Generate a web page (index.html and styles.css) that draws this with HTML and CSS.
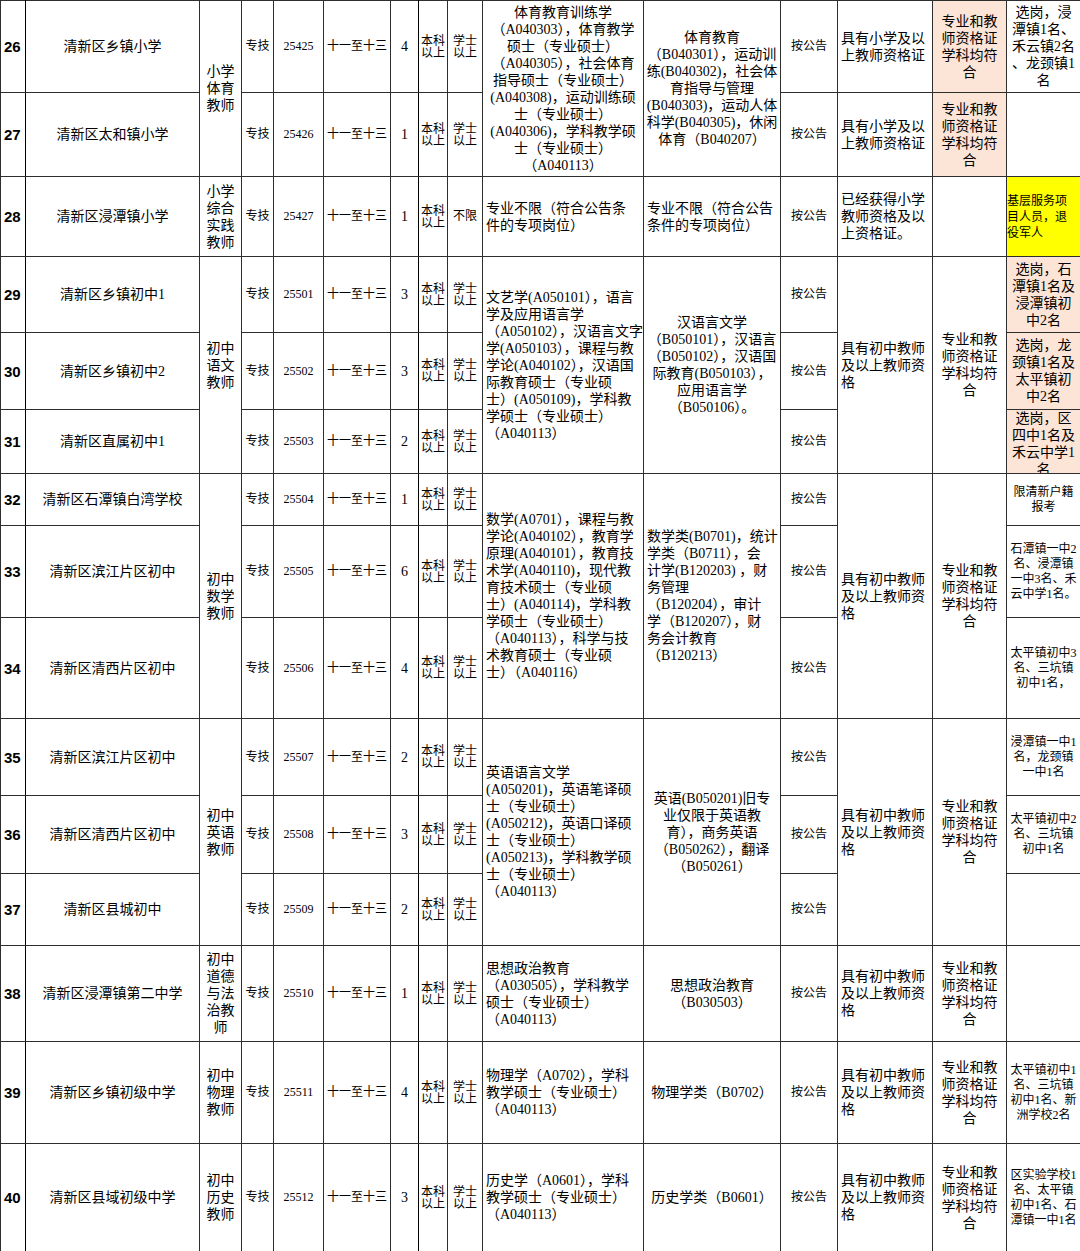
FILE: index.html
```html
<!DOCTYPE html>
<html lang="zh-CN">
<head>
<meta charset="utf-8">
<title>清新区教师招聘岗位表</title>
<link rel="stylesheet" href="styles.css">
</head>
<body>
<table class="t">
<colgroup>
<col class="w1"><col class="w2"><col class="w3"><col class="w4"><col class="w5"><col class="w6"><col class="w7"><col class="w8"><col class="w9"><col class="w10"><col class="w11"><col class="w12"><col class="w13"><col class="w14"><col class="w15">
</colgroup>
<tbody>
<tr class="r26">
<td class="n">26</td><td class="s">清新区乡镇小学</td>
<td class="p" rowspan="2">小学<br>体育<br>教师</td>
<td class="sm">专技</td><td class="sm">25425</td><td class="sm">十一至十三</td><td class="cnt">4</td>
<td class="edu">本科<br>以上</td><td class="edu">学士<br>以上</td>
<td rowspan="2">体育教育训练学<br>（A040303），体育教学<br>硕士（专业硕士）<br>（A040305），社会体育<br>指导硕士（专业硕士）<br>(A040308)，运动训练硕<br>士（专业硕士）<br>(A040306)，学科教学硕<br>士（专业硕士）<br>（A040113）</td>
<td rowspan="2">体育教育<br>（B040301），运动训<br>练(B040302)，社会体<br>育指导与管理<br>(B040303)，运动人体<br>科学(B040305)，休闲<br>体育（B040207）</td>
<td class="sm">按公告</td>
<td class="l">具有小学及以<br>上教师资格证</td>
<td class="peach">专业和教<br>师资格证<br>学科均符<br>合</td>
<td>选岗，浸<br>潭镇1名、<br>禾云镇2名<br>、龙颈镇1<br>名</td>
</tr>
<tr class="r27">
<td class="n">27</td><td class="s">清新区太和镇小学</td>
<td class="sm">专技</td><td class="sm">25426</td><td class="sm">十一至十三</td><td class="cnt">1</td>
<td class="edu">本科<br>以上</td><td class="edu">学士<br>以上</td>
<td class="sm">按公告</td>
<td class="l">具有小学及以<br>上教师资格证</td>
<td class="peach">专业和教<br>师资格证<br>学科均符<br>合</td>
<td></td>
</tr>
<tr class="r28">
<td class="n">28</td><td class="s">清新区浸潭镇小学</td>
<td class="p">小学<br>综合<br>实践<br>教师</td>
<td class="sm">专技</td><td class="sm">25427</td><td class="sm">十一至十三</td><td class="cnt">1</td>
<td class="edu">本科<br>以上</td><td class="sm">不限</td>
<td class="l">专业不限（符合公告条<br>件的专项岗位）</td>
<td class="l">专业不限（符合公告<br>条件的专项岗位）</td>
<td class="sm">按公告</td>
<td class="l">已经获得小学<br>教师资格及以<br>上资格证。</td>
<td></td>
<td class="yellow rm l">基层服务项<br>目人员，退<br>役军人</td>
</tr>
<tr class="r29">
<td class="n">29</td><td class="s">清新区乡镇初中1</td>
<td class="p" rowspan="3">初中<br>语文<br>教师</td>
<td class="sm">专技</td><td class="sm">25501</td><td class="sm">十一至十三</td><td class="cnt">3</td>
<td class="edu">本科<br>以上</td><td class="edu">学士<br>以上</td>
<td class="l" rowspan="3">文艺学(A050101），语言<br>学及应用语言学<br>（A050102），汉语言文字<br>学(A050103），课程与教<br>学论(A040102），汉语国<br>际教育硕士（专业硕<br>士）(A050109)，学科教<br>学硕士（专业硕士）<br>（A040113）</td>
<td rowspan="3">汉语言文学<br>（B050101），汉语言<br>（B050102），汉语国<br>际教育(B050103），<br>应用语言学<br>（B050106）。</td>
<td class="sm">按公告</td>
<td class="l" rowspan="3">具有初中教师<br>及以上教师资<br>格</td>
<td rowspan="3">专业和教<br>师资格证<br>学科均符<br>合</td>
<td class="peach">选岗，石<br>潭镇1名及<br>浸潭镇初<br>中2名</td>
</tr>
<tr class="r30">
<td class="n">30</td><td class="s">清新区乡镇初中2</td>
<td class="sm">专技</td><td class="sm">25502</td><td class="sm">十一至十三</td><td class="cnt">3</td>
<td class="edu">本科<br>以上</td><td class="edu">学士<br>以上</td>
<td class="sm">按公告</td>
<td class="peach">选岗，龙<br>颈镇1名及<br>太平镇初<br>中2名</td>
</tr>
<tr class="r31">
<td class="n">31</td><td class="s">清新区直属初中1</td>
<td class="sm">专技</td><td class="sm">25503</td><td class="sm">十一至十三</td><td class="cnt">2</td>
<td class="edu">本科<br>以上</td><td class="edu">学士<br>以上</td>
<td class="sm">按公告</td>
<td class="peach"><div class="clip">选岗，区<br>四中1名及<br>禾云中学1<br>名</div></td>
</tr>
<tr class="r32">
<td class="n">32</td><td class="s">清新区石潭镇白湾学校</td>
<td class="p" rowspan="3">初中<br>数学<br>教师</td>
<td class="sm">专技</td><td class="sm">25504</td><td class="sm">十一至十三</td><td class="cnt">1</td>
<td class="edu">本科<br>以上</td><td class="edu">学士<br>以上</td>
<td class="l" rowspan="3">数学(A0701），课程与教<br>学论(A040102），教育学<br>原理(A040101），教育技<br>术学(A040110)，现代教<br>育技术硕士（专业硕<br>士）(A040114)，学科教<br>学硕士（专业硕士）<br>（A040113），科学与技<br>术教育硕士（专业硕<br>士）（A040116）</td>
<td class="l" rowspan="3">数学类(B0701)，统计<br>学类（B0711），会<br>计学(B120203)&nbsp;，财<br>务管理<br>（B120204），审计<br>学（B120207），财<br>务会计教育<br>（B120213）</td>
<td class="sm">按公告</td>
<td class="l" rowspan="3">具有初中教师<br>及以上教师资<br>格</td>
<td rowspan="3">专业和教<br>师资格证<br>学科均符<br>合</td>
<td class="rm">限清新户籍<br>报考</td>
</tr>
<tr class="r33">
<td class="n">33</td><td class="s">清新区滨江片区初中</td>
<td class="sm">专技</td><td class="sm">25505</td><td class="sm">十一至十三</td><td class="cnt">6</td>
<td class="edu">本科<br>以上</td><td class="edu">学士<br>以上</td>
<td class="sm">按公告</td>
<td class="rm">石潭镇一中2<br>名、浸潭镇<br>一中3名、禾<br>云中学1名。</td>
</tr>
<tr class="r34">
<td class="n">34</td><td class="s">清新区清西片区初中</td>
<td class="sm">专技</td><td class="sm">25506</td><td class="sm">十一至十三</td><td class="cnt">4</td>
<td class="edu">本科<br>以上</td><td class="edu">学士<br>以上</td>
<td class="sm">按公告</td>
<td class="rm">太平镇初中3<br>名、三坑镇<br>初中1名，</td>
</tr>
<tr class="r35">
<td class="n">35</td><td class="s">清新区滨江片区初中</td>
<td class="p" rowspan="3">初中<br>英语<br>教师</td>
<td class="sm">专技</td><td class="sm">25507</td><td class="sm">十一至十三</td><td class="cnt">2</td>
<td class="edu">本科<br>以上</td><td class="edu">学士<br>以上</td>
<td class="l" rowspan="3">英语语言文学<br>(A050201)，英语笔译硕<br>士（专业硕士）<br>(A050212)，英语口译硕<br>士（专业硕士）<br>(A050213)，学科教学硕<br>士（专业硕士）<br>（A040113）</td>
<td rowspan="3">英语(B050201)旧专<br>业仅限于英语教<br>育），商务英语<br>（B050262），翻译<br>（B050261）</td>
<td class="sm">按公告</td>
<td class="l" rowspan="3">具有初中教师<br>及以上教师资<br>格</td>
<td rowspan="3">专业和教<br>师资格证<br>学科均符<br>合</td>
<td class="rm">浸潭镇一中1<br>名，龙颈镇<br>一中1名</td>
</tr>
<tr class="r36">
<td class="n">36</td><td class="s">清新区清西片区初中</td>
<td class="sm">专技</td><td class="sm">25508</td><td class="sm">十一至十三</td><td class="cnt">3</td>
<td class="edu">本科<br>以上</td><td class="edu">学士<br>以上</td>
<td class="sm">按公告</td>
<td class="rm">太平镇初中2<br>名、三坑镇<br>初中1名</td>
</tr>
<tr class="r37">
<td class="n">37</td><td class="s">清新区县城初中</td>
<td class="sm">专技</td><td class="sm">25509</td><td class="sm">十一至十三</td><td class="cnt">2</td>
<td class="edu">本科<br>以上</td><td class="edu">学士<br>以上</td>
<td class="sm">按公告</td>
<td></td>
</tr>
<tr class="r38">
<td class="n">38</td><td class="s">清新区浸潭镇第二中学</td>
<td class="p">初中<br>道德<br>与法<br>治教<br>师</td>
<td class="sm">专技</td><td class="sm">25510</td><td class="sm">十一至十三</td><td class="cnt">1</td>
<td class="edu">本科<br>以上</td><td class="edu">学士<br>以上</td>
<td class="l">思想政治教育<br>（A030505），学科教学<br>硕士（专业硕士）<br>（A040113）</td>
<td>思想政治教育<br>（B030503）</td>
<td class="sm">按公告</td>
<td class="l">具有初中教师<br>及以上教师资<br>格</td>
<td>专业和教<br>师资格证<br>学科均符<br>合</td>
<td></td>
</tr>
<tr class="r39">
<td class="n">39</td><td class="s">清新区乡镇初级中学</td>
<td class="p">初中<br>物理<br>教师</td>
<td class="sm">专技</td><td class="sm">25511</td><td class="sm">十一至十三</td><td class="cnt">4</td>
<td class="edu">本科<br>以上</td><td class="edu">学士<br>以上</td>
<td class="l">物理学（A0702），学科<br>教学硕士（专业硕士）<br>（A040113）</td>
<td>物理学类（B0702）</td>
<td class="sm">按公告</td>
<td class="l">具有初中教师<br>及以上教师资<br>格</td>
<td>专业和教<br>师资格证<br>学科均符<br>合</td>
<td class="rm">太平镇初中1<br>名、三坑镇<br>初中1名、新<br>洲学校2名</td>
</tr>
<tr class="r40">
<td class="n">40</td><td class="s">清新区县域初级中学</td>
<td class="p">初中<br>历史<br>教师</td>
<td class="sm">专技</td><td class="sm">25512</td><td class="sm">十一至十三</td><td class="cnt">3</td>
<td class="edu">本科<br>以上</td><td class="edu">学士<br>以上</td>
<td class="l">历史学（A0601），学科<br>教学硕士（专业硕士）<br>（A040113）</td>
<td>历史学类（B0601）</td>
<td class="sm">按公告</td>
<td class="l">具有初中教师<br>及以上教师资<br>格</td>
<td>专业和教<br>师资格证<br>学科均符<br>合</td>
<td class="rm">区实验学校1<br>名、太平镇<br>初中1名、石<br>潭镇一中1名</td>
</tr>
</tbody>
</table>
</body>
</html>
```

FILE: styles.css
```css
html, body {
  margin: 0;
  padding: 0;
  background: #ffffff;
}

.t {
  border-collapse: collapse;
  table-layout: fixed;
  width: 1080px;
  font-family: "Liberation Serif", "Noto Sans CJK SC", serif;
  font-size: 14px;
  line-height: 17px;
  color: #000000;
}

.w1 { width: 25px; }
.w2 { width: 174px; }
.w3 { width: 42px; }
.w4 { width: 32px; }
.w5 { width: 50px; }
.w6 { width: 67px; }
.w7 { width: 28px; }
.w8 { width: 29px; }
.w9 { width: 35px; }
.w10 { width: 161px; }
.w11 { width: 137px; }
.w12 { width: 57px; }
.w13 { width: 95px; }
.w14 { width: 74px; }
.w15 { width: 74px; }

.t td {
  border: 1px solid #2e2e2e;
  padding: 0 2px;
  vertical-align: middle;
  text-align: center;
  white-space: nowrap;
  overflow: hidden;
}

.t td.l {
  text-align: left;
  padding-left: 3px;
}

.r26 { height: 92px; }
.r27 { height: 84px; }
.r28 { height: 80px; }
.r29 { height: 76px; }
.r30 { height: 77px; }
.r31 { height: 64px; }
.r32 { height: 52px; }
.r33 { height: 92px; }
.r34 { height: 101px; }
.r35 { height: 77px; }
.r36 { height: 78px; }
.r37 { height: 72px; }
.r38 { height: 96px; }
.r39 { height: 102px; }
.r40 { height: 108px; }

.t td.n {
  font-family: "Liberation Sans", "Noto Sans CJK SC", sans-serif;
  font-weight: bold;
  font-size: 15px;
  padding: 0 0 0 3px;
  text-align: left;
  border-right-color: #000;
}

.t td.s {
  font-size: 14px;
}

.t td.p {
  font-size: 14px;
  padding: 0;
}

.t td.sm {
  font-size: 12px;
  padding: 0;
}

.t td.cnt {
  font-size: 14px;
  padding: 0;
  border-right-color: #000;
}

.t td.edu {
  font-size: 12px;
  line-height: 12px;
  padding: 0;
}

.t td.rm {
  font-size: 12px;
  line-height: 15px;
  padding: 0;
}

.t td.peach {
  background: #fce4d6;
}

.t td.yellow {
  background: #ffff00;
  line-height: 16px;
}

.clip {
  height: 63px;
  overflow: hidden;
}
```
